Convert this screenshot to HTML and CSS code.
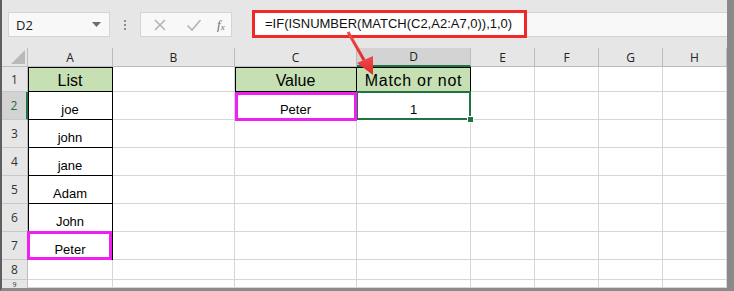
FILE: index.html
```html
<!DOCTYPE html>
<html>
<head>
<meta charset="utf-8">
<link rel="stylesheet" href="styles.css">
</head>
<body>
<div class="win">
  <div class="toolbar">
    <div class="namebox">
      <span class="nb-text">D2</span>
      <svg class="caret" width="9" height="5" viewBox="0 0 9 5"><path d="M0 0H9L4.5 5Z" fill="#6b6b6b"/></svg>
    </div>
    <div class="grip"><i></i><i></i><i></i></div>
    <div class="fbtns">
      <svg width="14" height="14" viewBox="0 0 14 14"><path d="M2 2L12 12M12 2L2 12" stroke="#b4b4b4" stroke-width="1.6" fill="none"/></svg>
      <svg width="16" height="14" viewBox="0 0 16 14"><path d="M1.5 7.5L6 12L14.5 2" stroke="#b4b4b4" stroke-width="1.6" fill="none"/></svg>
      <span class="fx"><i>f</i><sub>x</sub></span>
    </div>
    <div class="fbar">
      <div class="formula">=IF(ISNUMBER(MATCH(C2,A2:A7,0)),1,0)</div>
    </div>
  </div>

  <div class="sheet">
    <div class="corner"><svg width="14" height="14" viewBox="0 0 14 14"><path d="M14 0V14H0Z" fill="#b9b9b9"/></svg></div>
    <div class="ch">A</div><div class="ch">B</div><div class="ch">C</div><div class="ch hsel">D</div><div class="ch">E</div><div class="ch">F</div><div class="ch">G</div><div class="ch">H</div>

    <div class="rh">1</div>
    <div class="c big g bk bl-t">List</div><div class="c"></div><div class="c big g bk bl-t">Value</div><div class="c big wide g bk bt">Match or not</div><div class="c"></div><div class="c"></div><div class="c"></div><div class="c"></div>

    <div class="rh rsel">2</div>
    <div class="c bk bl">joe</div><div class="c"></div><div class="c mg">Peter</div><div class="c sel">1</div><div class="c"></div><div class="c"></div><div class="c"></div><div class="c"></div>

    <div class="rh">3</div>
    <div class="c bk bl">john</div><div class="c"></div><div class="c"></div><div class="c"></div><div class="c"></div><div class="c"></div><div class="c"></div><div class="c"></div>

    <div class="rh">4</div>
    <div class="c bk bl">jane</div><div class="c"></div><div class="c"></div><div class="c"></div><div class="c"></div><div class="c"></div><div class="c"></div><div class="c"></div>

    <div class="rh">5</div>
    <div class="c bk bl">Adam</div><div class="c"></div><div class="c"></div><div class="c"></div><div class="c"></div><div class="c"></div><div class="c"></div><div class="c"></div>

    <div class="rh">6</div>
    <div class="c bk bl">John</div><div class="c"></div><div class="c"></div><div class="c"></div><div class="c"></div><div class="c"></div><div class="c"></div><div class="c"></div>

    <div class="rh">7</div>
    <div class="c bk bl mg mg-a">Peter</div><div class="c"></div><div class="c"></div><div class="c"></div><div class="c"></div><div class="c"></div><div class="c"></div><div class="c"></div>

    <div class="rh">8</div>
    <div class="c"></div><div class="c"></div><div class="c"></div><div class="c"></div><div class="c"></div><div class="c"></div><div class="c"></div><div class="c"></div>

    <div class="rh r9">9</div>
    <div class="c"></div><div class="c"></div><div class="c"></div><div class="c"></div><div class="c"></div><div class="c"></div><div class="c"></div><div class="c"></div>
  </div>

  <svg class="arrow" width="734" height="291" viewBox="0 0 734 291">
    <defs>
      <linearGradient id="ar" x1="0" y1="0" x2="0" y2="1">
        <stop offset="0" stop-color="#f04a4a"/>
        <stop offset="1" stop-color="#e02a2a"/>
      </linearGradient>
    </defs>
    <path d="M348 32L364 60" stroke="url(#ar)" stroke-width="3" fill="none"/>
    <path d="M357 63L373 56L373 75Z" fill="url(#ar)"/>
  </svg>
</div>
</body>
</html>
```

FILE: styles.css
```css
html, body {
  margin: 0;
  padding: 0;
  background: #ffffff;
}

.win {
  position: relative;
  width: 734px;
  height: 291px;
  box-sizing: border-box;
  border-left: 2px solid #5f5f5f;
  border-right: 7px solid #8a8a8a;
  border-bottom: 3px solid #8a8a8a;
  background: #e6e6e6;
  overflow: hidden;
  font-family: "Open Sans", "Liberation Sans", sans-serif;
}

/* ---------- toolbar ---------- */
.toolbar {
  display: flex;
  align-items: flex-start;
  height: 48px;
  box-sizing: border-box;
  padding-top: 12px;
}

.namebox {
  margin-left: 6px;
  width: 102px;
  height: 25px;
  box-sizing: border-box;
  background: #f8f8f8;
  border: 1px solid #d4d4d4;
  display: flex;
  align-items: center;
  justify-content: space-between;
  padding: 0 8px 0 7px;
}

.nb-text {
  font-size: 13px;
  color: #1a1a1a;
}

.grip {
  width: 30px;
  height: 25px;
  display: flex;
  flex-direction: column;
  align-items: center;
  justify-content: center;
  gap: 2px;
}

.grip i {
  display: block;
  width: 2px;
  height: 2px;
  background: #8c8c8c;
}

.fbtns {
  width: 92px;
  height: 25px;
  box-sizing: border-box;
  background: #f8f8f8;
  border: 1px solid #d4d4d4;
  display: flex;
  align-items: center;
  padding-left: 12px;
  gap: 19px;
}

.fx {
  font-family: "Liberation Serif", serif;
  font-size: 13px;
  color: #6e6e6e;
  margin-left: -4px;
}

.fx i {
  font-style: italic;
}

.fx sub {
  font-size: 9px;
  font-style: italic;
  vertical-align: -1px;
}

.fbar {
  flex: 1;
  margin-left: 20px;
  height: 25px;
  box-sizing: border-box;
  background: #f8f8f8;
  border-top: 1px solid #d2d2d2;
  border-bottom: 1px solid #d2d2d2;
  display: flex;
}

.formula {
  width: 275px;
  height: 28px;
  margin-top: -3px;
  box-sizing: border-box;
  border: 3px solid #f02828;
  background: #ffffff;
  padding-left: 10px;
  font-family: "Liberation Sans", sans-serif;
  font-size: 13px;
  line-height: 22px;
  color: #111;
  white-space: nowrap;
}

/* ---------- sheet ---------- */
.sheet {
  display: grid;
  grid-template-columns: 26px 85px 122px 122px 114px 64px 64px 64px 64px;
  grid-template-rows: 19px 25px repeat(6, 28px) 20px 8px;
}

.corner {
  background: #e6e6e6;
  border-right: 1px solid #bdbdbd;
  border-bottom: 1px solid #bdbdbd;
  display: flex;
  align-items: flex-end;
  justify-content: flex-end;
  padding: 0 2px 2px 0;
}

.ch {
  background: #e6e6e6;
  border-right: 1px solid #bcbcbc;
  border-bottom: 1px solid #bdbdbd;
  display: flex;
  align-items: center;
  justify-content: center;
  font-size: 12px;
  color: #222;
}

.ch.hsel {
  background: #d3d3d3;
  border-bottom: 2px solid #217346;
}

.rh {
  background: #e6e6e6;
  border-right: 1px solid #bdbdbd;
  border-bottom: 1px solid #c9c9c9;
  display: flex;
  align-items: center;
  justify-content: center;
  font-size: 12px;
  color: #333;
  overflow: hidden;
}

.rh.rsel {
  background: #d3d3d3;
  color: #1f6b42;
  border-right: 2px solid #217346;
}

.rh.r9 {
  align-items: flex-start;
  font-size: 7px;
  line-height: 7px;
  padding-top: 1px;
  border-bottom: 0;
}

.c {
  background: #ffffff;
  border-right: 1px solid #d6d6d6;
  border-bottom: 1px solid #d6d6d6;
  display: flex;
  align-items: flex-end;
  justify-content: center;
  padding-bottom: 2px;
  font-family: "Liberation Sans", sans-serif;
  font-size: 13px;
  color: #000;
  white-space: nowrap;
  overflow: visible;
}

.c.big {
  font-size: 16px;
  padding-bottom: 1px;
}

.c.wide {
  letter-spacing: 0.7px;
}

.c.g {
  background: #c6e0b4;
}

.c.bk {
  border-right-color: #000;
  border-bottom-color: #000;
}

.c.bl {
  box-shadow: inset 1px 0 0 #000;
}

.c.bt {
  box-shadow: inset 0 1px 0 #000;
}

.c.bl-t {
  box-shadow: inset 1px 0 0 #000, inset 0 1px 0 #000;
}

/* magenta highlight boxes (annotation overlay) */
.c.mg {
  position: relative;
  z-index: 2;
}

.c.mg::after {
  content: "";
  position: absolute;
  left: 0;
  top: 0;
  right: -1px;
  bottom: -2px;
  border: 3px solid #f020f0;
}

.c.mg-a::after {
  left: -1px;
  top: -1px;
  right: 0;
  bottom: -1px;
}

/* active cell selection */
.c.sel {
  position: relative;
  z-index: 1;
}

.c.sel::after {
  content: "";
  position: absolute;
  left: -1px;
  top: -1px;
  right: -1px;
  bottom: -1px;
  border: 2px solid #217346;
}

.c.sel::before {
  content: "";
  position: absolute;
  right: -4px;
  bottom: -4px;
  width: 5px;
  height: 5px;
  background: #217346;
  border: 1px solid #fff;
  z-index: 2;
}

.arrow {
  position: absolute;
  left: -2px;
  top: 0;
  pointer-events: none;
  z-index: 5;
}
```
